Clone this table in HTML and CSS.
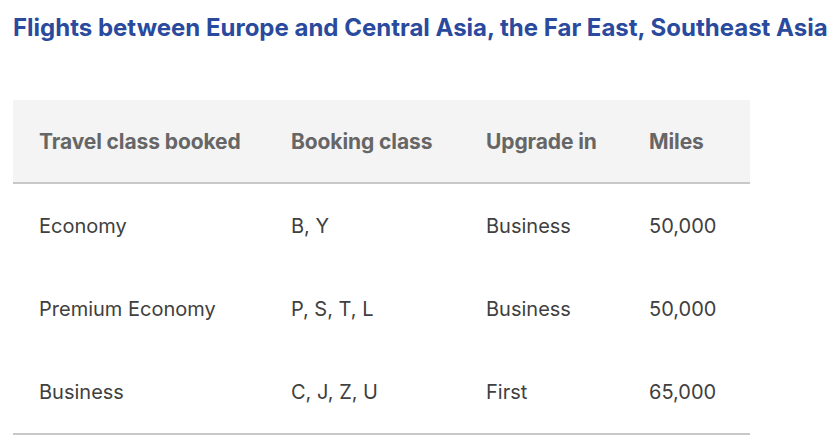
FILE: index.html
```html
<!DOCTYPE html>
<html>
<head>
<meta charset="utf-8">
<link rel="stylesheet" href="styles.css">
</head>
<body>
<h2 class="title">Flights between Europe and Central Asia, the Far East, Southeast Asia</h2>
<table class="miles">
  <colgroup>
    <col class="c1"><col class="c2"><col class="c3"><col class="c4">
  </colgroup>
  <thead>
    <tr><th>Travel class booked</th><th>Booking class</th><th>Upgrade in</th><th>Miles</th></tr>
  </thead>
  <tbody>
    <tr><td>Economy</td><td>B, Y</td><td>Business</td><td>50,000</td></tr>
    <tr><td>Premium Economy</td><td>P, S, T, L</td><td>Business</td><td>50,000</td></tr>
    <tr><td>Business</td><td>C, J, Z, U</td><td>First</td><td>65,000</td></tr>
  </tbody>
</table>
</body>
</html>
```
FILE: styles.css
```css
html, body {
  margin: 0;
  padding: 0;
  background: #fff;
}
body {
  padding: 14px 13px 0 13px;
  font-family: Inter, "Liberation Sans", sans-serif;
}
.title {
  margin: 0;
  font-size: 24px;
  line-height: 28px;
  font-weight: 700;
  color: #2a4a9e;
  letter-spacing: 0;
  white-space: nowrap;
}
.miles {
  margin-top: 58px;
  width: 737px;
  border-collapse: collapse;
  table-layout: fixed;
}
.c1 { width: 252px; }
.c2 { width: 195px; }
.c3 { width: 163px; }
.c4 { width: 127px; }
.miles th {
  background: #f4f4f4;
  height: 82px;
  padding: 0 0 0 26px;
  text-align: left;
  font-size: 21px;
  font-weight: 700;
  color: #666;
  border-bottom: 2px solid #c8c8c8;
  letter-spacing: -0.1px;
  white-space: nowrap;
}
.miles td {
  height: 83px;
  padding: 0 0 0 26px;
  font-size: 20px;
  font-weight: 400;
  color: #404040;
  white-space: nowrap;
}
.miles tbody tr:last-child td {
  border-bottom: 2px solid #c8c8c8;
}
```
